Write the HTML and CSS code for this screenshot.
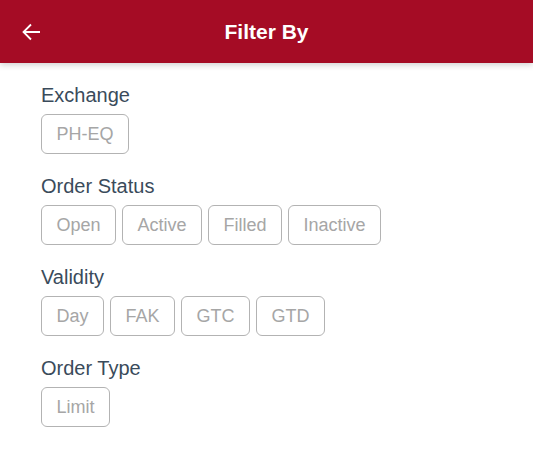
FILE: index.html
```html
<!DOCTYPE html>
<html>
<head>
<meta charset="utf-8">
<link rel="stylesheet" href="styles.css">
</head>
<body>
<header class="topbar">
  <span class="back">
    <svg width="20" height="20" viewBox="0 0 20 20"><path d="M19 10H2.5M10 2.5L2.5 10L10 17.5" fill="none" stroke="#fff" stroke-width="1.8" stroke-linecap="butt" stroke-linejoin="miter"/></svg>
  </span>
  <h1 class="title">Filter By</h1>
</header>
<main class="content">
  <section class="group">
    <div class="label">Exchange</div>
    <div class="chips"><span class="chip">PH-EQ</span></div>
  </section>
  <section class="group">
    <div class="label">Order Status</div>
    <div class="chips"><span class="chip">Open</span><span class="chip">Active</span><span class="chip">Filled</span><span class="chip">Inactive</span></div>
  </section>
  <section class="group">
    <div class="label">Validity</div>
    <div class="chips"><span class="chip">Day</span><span class="chip">FAK</span><span class="chip">GTC</span><span class="chip">GTD</span></div>
  </section>
  <section class="group">
    <div class="label">Order Type</div>
    <div class="chips"><span class="chip">Limit</span></div>
  </section>
</main>
</body>
</html>
```
FILE: styles.css
```css
* { box-sizing: border-box; }
html, body { margin: 0; padding: 0; background: #fff; }
body { font-family: "Liberation Sans", Arial, sans-serif; width: 533px; height: 462px; overflow: hidden; }
.topbar {
  height: 63px;
  background: #a50c25;
  display: flex;
  align-items: center;
  justify-content: center;
  position: relative;
  box-shadow: 0 2px 6px rgba(0,0,0,0.18);
}
.back { position: absolute; left: 21px; top: 22px; width: 20px; height: 20px; display: block; }
.back svg { display: block; }
.title { margin: 0; color: #fff; font-size: 21px; font-weight: bold; line-height: 24px; }
.content { padding: 20px 0 0 41px; display: flex; flex-direction: column; gap: 20px; }
.group { display: flex; flex-direction: column; gap: 7px; }
.label { font-size: 20px; line-height: 24px; color: #3a4b5b; }
.chips { display: flex; gap: 6px; }
.chip {
  height: 40px;
  padding: 0 14.5px;
  border: 1.5px solid #b3b3b3;
  border-radius: 6px;
  color: #a6a6a6;
  font-size: 18px;
  display: flex;
  align-items: center;
}
```
